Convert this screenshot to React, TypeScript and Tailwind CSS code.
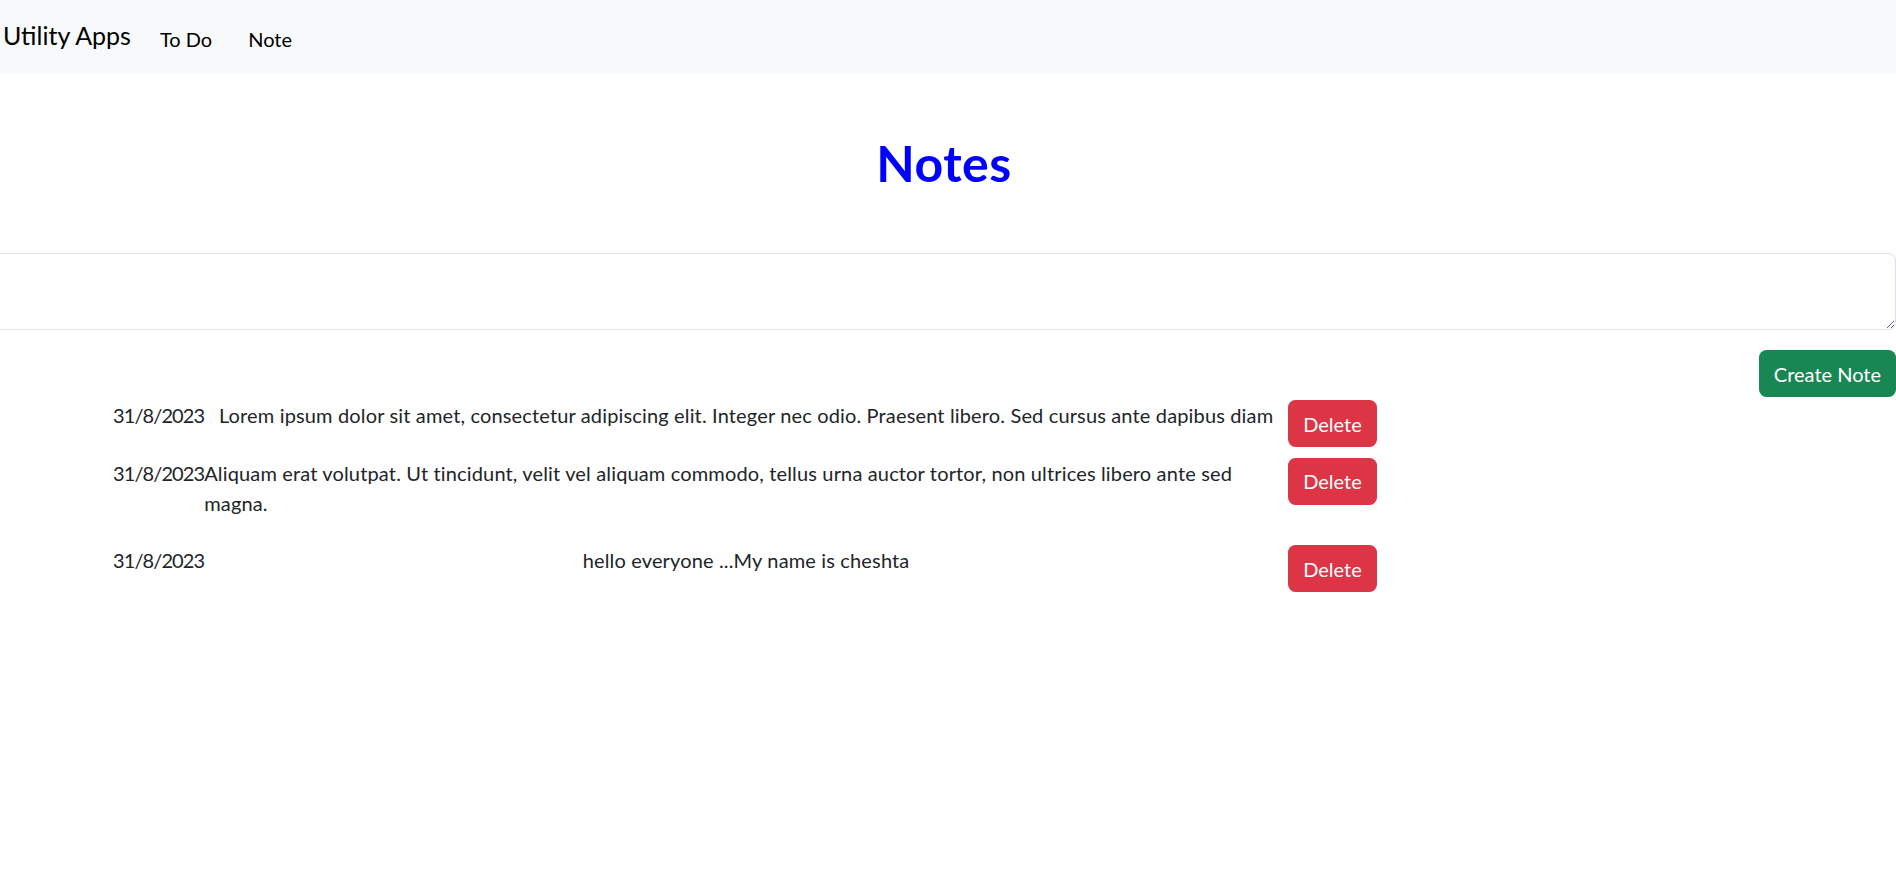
import React from 'react';

const notes = [
  {
    date: '31/8/2023',
    text: 'Lorem ipsum dolor sit amet, consectetur adipiscing elit. Integer nec odio. Praesent libero. Sed cursus ante dapibus diam',
  },
  {
    date: '31/8/2023',
    text: 'Aliquam erat volutpat. Ut tincidunt, velit vel aliquam commodo, tellus urna auctor tortor, non ultrices libero ante sed magna.',
  },
  {
    date: '31/8/2023',
    text: 'hello everyone ...My name is cheshta',
  },
];

const Navbar = () => (
  <nav className="h-[73px] bg-[#f8f9fa] flex items-start">
    <a className="ml-[3px] mt-[17px] text-[25px] leading-[37.5px] text-black">Utility Apps</a>
    <ul className="flex mt-[23.5px] ml-[29px] gap-[16px]">
      <li className="text-[20px] leading-[30px] text-black px-[10px] -ml-[10px]">To Do</li>
      <li className="text-[20px] leading-[30px] text-black px-[10px]">Note</li>
    </ul>
  </nav>
);

export default function App() {
  return (
    <div className="min-h-screen bg-white text-[#212529] font-['Lato','Noto_Sans',sans-serif]">
      <Navbar />
      <h1 className="mt-[60px] text-center text-[50px] leading-[60px] font-bold text-[#0000ff] tracking-[0.5px] pr-[8px]">Notes</h1>
      <div className="mt-[60px]">
        <textarea className="block w-full h-[77px] border border-l-0 border-[#dee2e6] rounded-r-[7.5px] outline-none px-[15px] py-[7.5px] text-[20px]" />
      </div>
      <div className="flex justify-end mt-[20px]">
        <button className="h-[47px] px-[15px] bg-[#198754] text-white text-[20px] leading-[30px] rounded-[7.5px]">
          Create Note
        </button>
      </div>
      <div className="ml-[113px] w-[1264px] mt-[3px]">
        {notes.map((note, i) => (
          <div key={i} className="flex justify-between items-start mb-[7.5px]">
            <p className="shrink-0 text-[20px] leading-[30px] mb-[20px] tracking-[-0.9px]">{note.date}</p>
            <p className="text-[20px] leading-[30px] mb-[20px] tracking-[0.15px]">{note.text}</p>
            <button className="shrink-0 w-[89px] h-[47px] bg-[#dc3545] text-white text-[20px] leading-[30px] rounded-[7.5px]">
              Delete
            </button>
          </div>
        ))}
      </div>
    </div>
  );
}
